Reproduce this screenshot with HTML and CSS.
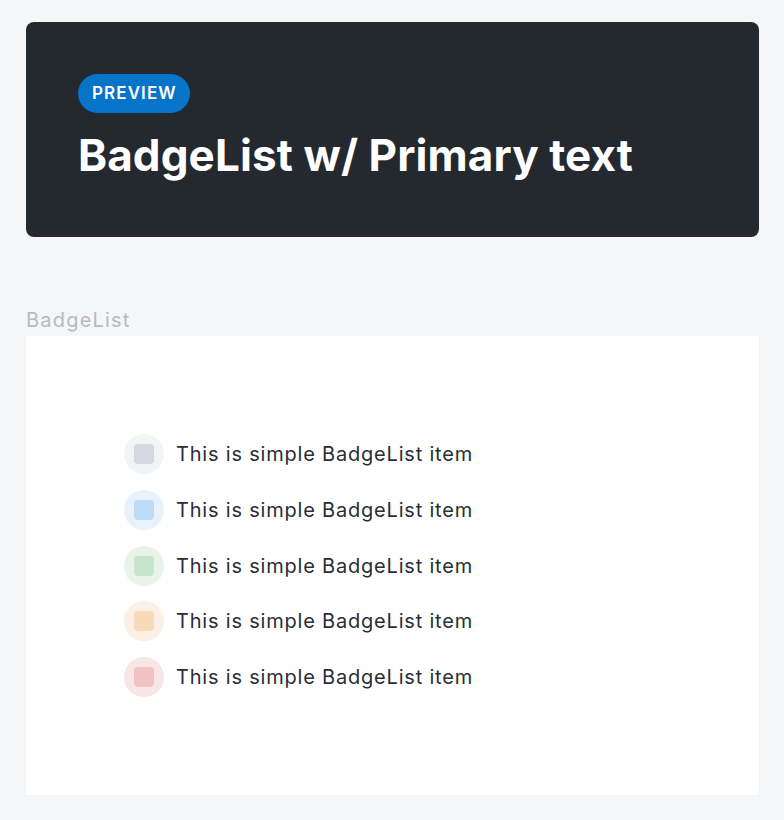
FILE: index.html
```html
<!DOCTYPE html>
<html>
<head>
<meta charset="utf-8">
<link rel="stylesheet" href="styles.css">
</head>
<body>
<div class="page">
  <header class="hero">
    <span class="pill">PREVIEW</span>
    <h1 class="title">BadgeList w/ Primary text</h1>
  </header>
  <section class="demo">
    <div class="demo-label">BadgeList</div>
    <div class="panel">
      <ul class="badge-list">
        <li class="item"><span class="dot gray"><span class="sq"></span></span><span class="txt">This is simple BadgeList item</span></li>
        <li class="item"><span class="dot blue"><span class="sq"></span></span><span class="txt">This is simple BadgeList item</span></li>
        <li class="item"><span class="dot green"><span class="sq"></span></span><span class="txt">This is simple BadgeList item</span></li>
        <li class="item"><span class="dot orange"><span class="sq"></span></span><span class="txt">This is simple BadgeList item</span></li>
        <li class="item"><span class="dot red"><span class="sq"></span></span><span class="txt">This is simple BadgeList item</span></li>
      </ul>
    </div>
  </section>
</div>
</body>
</html>
```
FILE: styles.css
```css
html, body {
  margin: 0;
  padding: 0;
  background: #f5f6f8;
}
body {
  font-family: "Inter", "Noto Sans", sans-serif;
}
.page {
  padding: 22px 25px 26px 26px;
}
.hero {
  background: #24282f;
  border-radius: 8px;
  height: 215px;
  box-sizing: border-box;
  padding: 52px 52px 0 52px;
}
.pill {
  display: inline-block;
  background: #0674c8;
  color: #fff;
  font-weight: 600;
  font-size: 17px;
  letter-spacing: 1.1px;
  height: 39px;
  line-height: 39px;
  padding: 0 13px 0 14px;
  border-radius: 20px;
}
.title {
  margin: 15px 0 0 0;
  color: #fff;
  font-size: 44px;
  font-weight: 700;
  line-height: 54px;
  letter-spacing: 0.1px;
}
.demo {
  margin-top: 70px;
}
.demo-label {
  color: #b7babf;
  font-size: 20px;
  line-height: 26px;
  letter-spacing: 1.2px;
  margin-bottom: 3px;
}
.panel {
  background: #fff;
  padding: 98px 98px;
}
.badge-list {
  list-style: none;
  margin: 0;
  padding: 0;
  display: flex;
  flex-direction: column;
  gap: 15.75px;
}
.item {
  display: flex;
  align-items: center;
  gap: 12px;
  height: 40px;
}
.dot {
  width: 40px;
  height: 40px;
  border-radius: 50%;
  display: flex;
  align-items: center;
  justify-content: center;
  flex: none;
}
.sq {
  width: 20px;
  height: 20px;
  border-radius: 4px;
}
.gray { background: #f3f4f6; }
.gray .sq { background: #d5d8e0; }
.blue { background: #e7f2fc; }
.blue .sq { background: #bcdcf5; }
.green { background: #e9f3ea; }
.green .sq { background: #c6e4cb; }
.orange { background: #fcefe3; }
.orange .sq { background: #f8dab8; }
.red { background: #f8e6e7; }
.red .sq { background: #f0c2c4; }
.txt {
  color: #2a2e35;
  font-size: 20px;
  letter-spacing: 0.8px;
}
```
